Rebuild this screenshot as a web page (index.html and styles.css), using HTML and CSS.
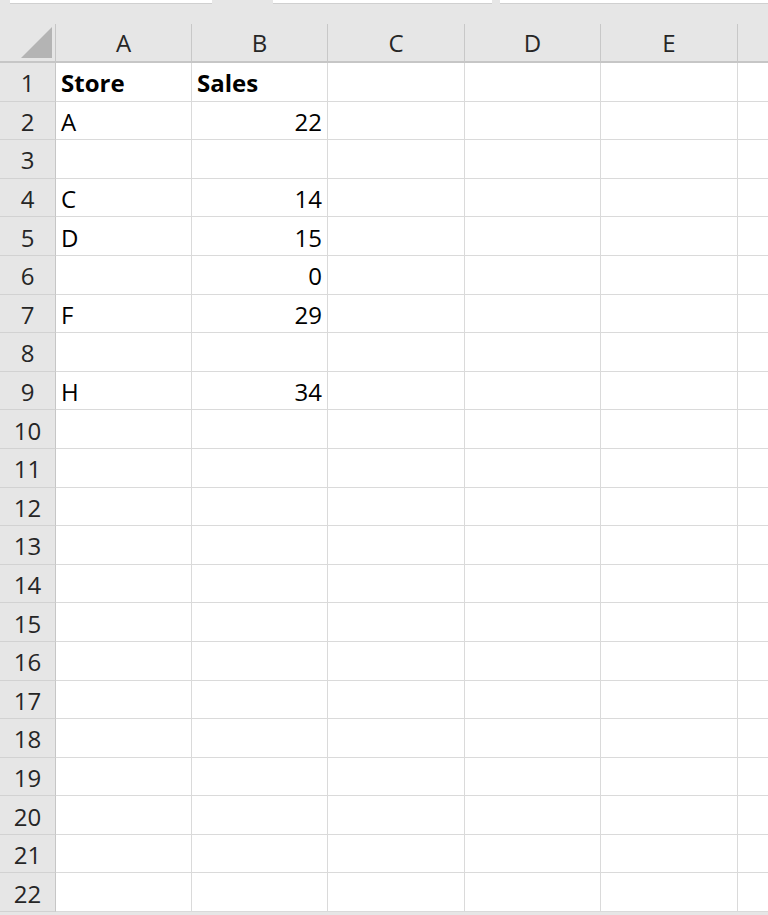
FILE: index.html
```html
<!DOCTYPE html>
<html>
<head>
<meta charset="utf-8">
<link rel="stylesheet" href="styles.css">
</head>
<body>
<div class="topbar">
  <div class="tb tb1"></div>
  <div class="tb tb2"></div>
  <div class="tb tb3"></div>
</div>
<div class="sheet">
  <div class="corner"><svg width="31" height="31" viewBox="0 0 31 31"><polygon points="31,0 31,31 0,31" fill="#b4b4b4"/></svg></div>
  <div class="ch">A</div><div class="ch">B</div><div class="ch">C</div><div class="ch">D</div><div class="ch">E</div><div class="ch last"></div>

  <div class="rh">1</div><div class="c b">Store</div><div class="c b">Sales</div><div class="c"></div><div class="c"></div><div class="c"></div><div class="c"></div>
  <div class="rh">2</div><div class="c">A</div><div class="c n">22</div><div class="c"></div><div class="c"></div><div class="c"></div><div class="c"></div>
  <div class="rh">3</div><div class="c"></div><div class="c"></div><div class="c"></div><div class="c"></div><div class="c"></div><div class="c"></div>
  <div class="rh">4</div><div class="c">C</div><div class="c n">14</div><div class="c"></div><div class="c"></div><div class="c"></div><div class="c"></div>
  <div class="rh">5</div><div class="c">D</div><div class="c n">15</div><div class="c"></div><div class="c"></div><div class="c"></div><div class="c"></div>
  <div class="rh">6</div><div class="c"></div><div class="c n">0</div><div class="c"></div><div class="c"></div><div class="c"></div><div class="c"></div>
  <div class="rh">7</div><div class="c">F</div><div class="c n">29</div><div class="c"></div><div class="c"></div><div class="c"></div><div class="c"></div>
  <div class="rh">8</div><div class="c"></div><div class="c"></div><div class="c"></div><div class="c"></div><div class="c"></div><div class="c"></div>
  <div class="rh">9</div><div class="c">H</div><div class="c n">34</div><div class="c"></div><div class="c"></div><div class="c"></div><div class="c"></div>
  <div class="rh">10</div><div class="c"></div><div class="c"></div><div class="c"></div><div class="c"></div><div class="c"></div><div class="c"></div>
  <div class="rh">11</div><div class="c"></div><div class="c"></div><div class="c"></div><div class="c"></div><div class="c"></div><div class="c"></div>
  <div class="rh">12</div><div class="c"></div><div class="c"></div><div class="c"></div><div class="c"></div><div class="c"></div><div class="c"></div>
  <div class="rh">13</div><div class="c"></div><div class="c"></div><div class="c"></div><div class="c"></div><div class="c"></div><div class="c"></div>
  <div class="rh">14</div><div class="c"></div><div class="c"></div><div class="c"></div><div class="c"></div><div class="c"></div><div class="c"></div>
  <div class="rh">15</div><div class="c"></div><div class="c"></div><div class="c"></div><div class="c"></div><div class="c"></div><div class="c"></div>
  <div class="rh">16</div><div class="c"></div><div class="c"></div><div class="c"></div><div class="c"></div><div class="c"></div><div class="c"></div>
  <div class="rh">17</div><div class="c"></div><div class="c"></div><div class="c"></div><div class="c"></div><div class="c"></div><div class="c"></div>
  <div class="rh">18</div><div class="c"></div><div class="c"></div><div class="c"></div><div class="c"></div><div class="c"></div><div class="c"></div>
  <div class="rh">19</div><div class="c"></div><div class="c"></div><div class="c"></div><div class="c"></div><div class="c"></div><div class="c"></div>
  <div class="rh">20</div><div class="c"></div><div class="c"></div><div class="c"></div><div class="c"></div><div class="c"></div><div class="c"></div>
  <div class="rh">21</div><div class="c"></div><div class="c"></div><div class="c"></div><div class="c"></div><div class="c"></div><div class="c"></div>
  <div class="rh">22</div><div class="c"></div><div class="c"></div><div class="c"></div><div class="c"></div><div class="c"></div><div class="c"></div>
</div>
</body>
</html>
```

FILE: styles.css
```css
html, body {
  margin: 0;
  padding: 0;
  background: #e6e6e6;
  overflow: hidden;
}
body {
  width: 768px;
  height: 915px;
  font-family: "Open Sans", "Noto Sans", sans-serif;
}
.topbar {
  height: 24px;
  background: #e6e6e6;
  display: flex;
  align-items: flex-start;
}
.tb {
  height: 3px;
  background: #ffffff;
  border-bottom: 1px solid #d0d0d0;
}
.tb1 { margin-left: 10px; width: 202px; }
.tb2 { margin-left: 61px; width: 219px; }
.tb3 { margin-left: 8px; flex: 1; }

.sheet {
  display: grid;
  grid-template-columns: 56px 136px 136px 137px 136px 137px 1fr;
  grid-template-rows: 39px repeat(22, 38.6px);
  background: #ffffff;
}
.corner {
  background: #e6e6e6;
  border-right: 1px solid #c6c6c6;
  border-bottom: 2px solid #c6c6c6;
  display: flex;
  align-items: flex-end;
  justify-content: flex-end;
  padding: 0 3px 3px 0;
}
.ch {
  background: #e6e6e6;
  border-right: 1px solid #c8c8c8;
  border-bottom: 2px solid #c6c6c6;
  display: flex;
  align-items: center;
  justify-content: center;
  font-size: 24px;
  color: #262626;
}
.ch.last { border-right: none; }
.rh {
  background: #e6e6e6;
  border-right: 1px solid #c6c6c6;
  border-bottom: 1px solid #d2d2d2;
  display: flex;
  align-items: center;
  justify-content: center;
  font-size: 24px;
  color: #262626;
  padding-top: 2px;
  box-sizing: border-box;
}
.c {
  background: #ffffff;
  border-right: 1px solid #dadada;
  border-bottom: 1px solid #dadada;
  display: flex;
  align-items: center;
  padding: 2px 5px 0 5px;
  font-size: 24px;
  color: #000000;
  box-sizing: border-box;
  min-width: 0;
}
.c:nth-child(7n) { border-right: none; }
.c.b { font-weight: 700; }
.c.n { justify-content: flex-end; }
```
